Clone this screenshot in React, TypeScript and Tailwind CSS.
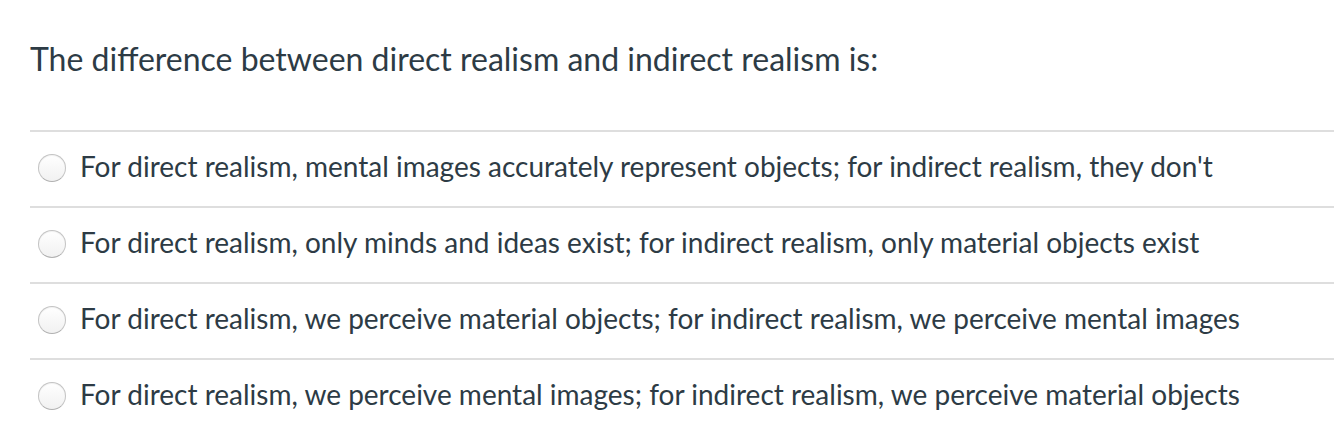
import React from "react";

const answers: string[] = [
  "For direct realism, mental images accurately represent objects; for indirect realism, they don't",
  "For direct realism, only minds and ideas exist; for indirect realism, only material objects exist",
  "For direct realism, we perceive material objects; for indirect realism, we perceive mental images",
  "For direct realism, we perceive mental images; for indirect realism, we perceive material objects",
];

const Radio: React.FC = () => (
  <span className="box-border h-[28px] w-[28px] shrink-0 rounded-full border border-[#c4c4c4] border-b-[#b0b0b0] bg-gradient-to-b from-white to-[#f1f1f1] shadow-[inset_0_1px_1px_rgba(0,0,0,0.05)]" />
);

const App: React.FC = () => {
  return (
    <div
      className="h-[446px] w-[1334px] overflow-hidden bg-white pl-[30px] text-[#2d3b45]"
      style={{ fontFamily: "Lato, 'Open Sans', sans-serif" }}
    >
      <h1 className="pt-[37px] text-[32px] font-normal leading-[44px]">
        The difference between direct realism and indirect realism is:
      </h1>
      <div className="mt-[49px]">
        {answers.map((answer, index) => (
          <label
            key={index}
            className="flex h-[76px] items-center gap-[14px] border-t-2 border-[#dedede] pb-[2px] pl-[8px]"
          >
            <Radio />
            <span className="pb-[4px] text-[28px] leading-[34px]">{answer}</span>
          </label>
        ))}
      </div>
    </div>
  );
};

export default App;
